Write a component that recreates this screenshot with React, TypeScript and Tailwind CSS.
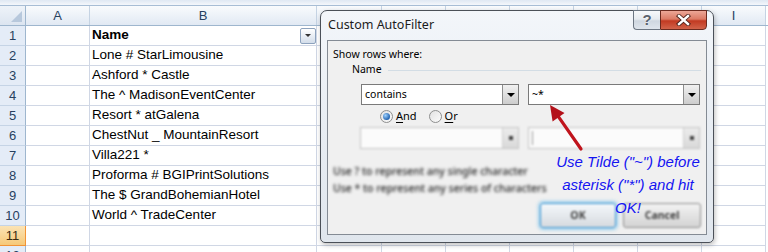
const names = [
  "Name",
  "Lone # StarLimousine",
  "Ashford * Castle",
  "The ^ MadisonEventCenter",
  "Resort * atGalena",
  "ChestNut _ MountainResort",
  "Villa221 *",
  "Proforma # BGIPrintSolutions",
  "The $ GrandBohemianHotel",
  "World ^ TradeCenter",
  "",
  "",
];

// C..H sit behind the dialog, so their letters are left blank
const cols = [
  { label: "A", w: "w-[64px]", show: true },
  { label: "B", w: "w-[227px]", show: true },
  { label: "C", w: "w-[65px]", show: false },
  { label: "D", w: "w-[64px]", show: false },
  { label: "E", w: "w-[64px]", show: false },
  { label: "F", w: "w-[64px]", show: false },
  { label: "G", w: "w-[64px]", show: false },
  { label: "H", w: "w-[64px]", show: false },
  { label: "I", w: "w-[64px]", show: true },
];

const Caret = ({ size = 4, color = "border-t-black" }: { size?: number; color?: string }) => (
  <span
    className={`block h-0 w-0 border-l-transparent border-r-transparent ${color} ${
      size === 4 ? "border-l-[4px] border-r-[4px] border-t-[4px]" : "border-l-[3px] border-r-[3px] border-t-[3px]"
    }`}
  />
);

const Combo = ({ w, value, disabled }: { w: string; value?: string; disabled?: boolean }) => (
  <div
    className={`flex h-full ${w} border ${
      disabled ? "border-[#c4c4c4] bg-[#fbfbfb]" : "border-[#7a7a7a] bg-white"
    }`}
  >
    <div className="flex flex-1 items-center pl-[3px] text-[10.5px] text-black">
      {disabled && value === "" ? <span className="block h-[14px] w-px bg-[#9a9a9a]" /> : value}
    </div>
    <div
      className={`flex w-[16px] items-center justify-center border-l bg-gradient-to-b ${
        disabled ? "border-[#cfcfcf] from-[#ececec] to-[#d9d9d9]" : "border-[#8e8e8e] from-[#f1f1f1] to-[#cdcdcd]"
      }`}
    >
      {disabled ? <span className="block h-[4px] w-[4px] bg-[#444]" /> : <Caret />}
    </div>
  </div>
);

const Radio = ({ checked, label }: { checked?: boolean; label: string }) => (
  <div className="flex items-center gap-[3px]">
    <span className="flex h-[13px] w-[13px] items-center justify-center rounded-full border border-[#8e8f8f] bg-gradient-to-br from-[#e2e2e2] to-[#fbfbfb]">
      {checked && (
        <span className="block h-[7px] w-[7px] rounded-full bg-[radial-gradient(circle_at_35%_35%,#9fd2ff,#1a5cab_75%)]" />
      )}
    </span>
    <span className="text-[11px] text-black">
      <span className="underline underline-offset-2">{label[0]}</span>
      {label.slice(1)}
    </span>
  </div>
);

const Sheet = () => (
  <div className="flex flex-col font-['Liberation_Sans',sans-serif]">
    {/* strip above the headers */}
    <div className="h-[6px] border-b border-[#a7bdd5] bg-gradient-to-b from-[#dfe8f3] to-[#f4f7fb]" />

    {/* column headers */}
    <div className="flex h-[20px] border-b border-[#9eb6ce]">
      <div className="flex w-[26px] items-end justify-end border-r border-[#9eb6ce] bg-gradient-to-b from-[#eef3f9] to-[#dce5f0] pb-[3px] pr-[3px]">
        <span className="block h-0 w-0 border-b-[11px] border-l-[11px] border-b-[#b7c8dc] border-l-transparent" />
      </div>
      {cols.map((c) => (
        <div
          key={c.label}
          className={`${c.w} flex shrink-0 items-center justify-center border-r border-[#c5d3e3] bg-gradient-to-b from-[#f9fbfd] to-[#e1e9f3] text-[13px] text-[#27415f]`}
        >
          {c.show ? c.label : null}
        </div>
      ))}
    </div>

    {/* rows */}
    {names.map((name, i) => {
      const active = i === 10;
      return (
        <div key={i} className="flex h-[20px] shrink-0">
          <div
            className={`flex w-[26px] items-center justify-center border-b border-r text-[13px] ${
              active
                ? "border-[#f29436] bg-gradient-to-b from-[#fbe3b4] to-[#f6c978] text-[#3b2a10]"
                : "border-b-[#c5d4e6] border-r-[#9eb6ce] bg-[#e4ecf7] text-[#27415f]"
            }`}
          >
            {i + 1}
          </div>
          {cols.map((c) => (
            <div
              key={c.label}
              className={`${c.w} flex shrink-0 items-center border-b border-r border-[#d0d7e5] text-[13.5px] text-black`}
            >
              {c.label === "B" && (
                <>
                  <span className={`pl-[2px] ${i === 0 ? "font-bold" : ""}`}>{name}</span>
                  {i === 0 && (
                    <span className="ml-auto flex h-[16px] w-[16px] items-center justify-center rounded-[2px] border border-[#8da2bd] bg-gradient-to-b from-white to-[#d3ddea]">
                      <Caret size={3} color="border-t-[#333]" />
                    </span>
                  )}
                </>
              )}
            </div>
          ))}
        </div>
      );
    })}
  </div>
);

const Dialog = () => (
  <div className="absolute left-[320px] top-[10px] flex h-[233px] w-[394px] flex-col rounded-t-[7px] rounded-b-[5px] border border-[#4b5058] bg-gradient-to-b from-[#f3f6fa] via-[#e8edf3] to-[#e0e6ed] font-['Noto_Sans',sans-serif] shadow-[1px_2px_5px_rgba(0,0,0,0.25)]">
    {/* title bar */}
    <div className="flex h-[29px] shrink-0 items-start">
      <span className="mt-[6px] pl-[7px] text-[12.5px] leading-[16px] text-[#1c1c1c]">Custom AutoFilter</span>
      <div className="-mt-px ml-auto mr-[6px] flex h-[20px]">
        <div className="flex w-[27px] items-center justify-center rounded-bl-[4px] border border-r-0 border-[#6c7682] bg-[linear-gradient(to_bottom,#f7f9fb_0%,#e6ebf0_45%,#cfd7e0_55%,#dfe5ec_100%)] font-['Liberation_Sans'] text-[15px] font-bold text-[#5b636e] [text-shadow:0_0_2px_#fff]">
          ?
        </div>
        <div className="flex w-[47px] items-center justify-center rounded-br-[4px] border border-[#6b2a1f] bg-[linear-gradient(to_bottom,#eca797_0%,#dc7a65_45%,#c23a22_55%,#d2634a_100%)]">
          <svg width="15" height="12" viewBox="0 0 15 12">
            <path d="M3 2 L12 10 M12 2 L3 10" stroke="#4a2019" strokeWidth="4.2" strokeLinecap="square" />
            <path d="M3 2 L12 10 M12 2 L3 10" stroke="#fff" strokeWidth="2.4" strokeLinecap="square" />
          </svg>
        </div>
      </div>
    </div>

    {/* client area */}
    <div className="mx-[6px] mb-[7px] flex flex-1 flex-col border border-[#848b94] bg-[#f0f0f0] px-[5px] text-[10.5px] text-black">
      <div className="mt-[5px] leading-[16px]">Show rows where:</div>
      <div className="flex h-[16px] items-center pl-[19px]">
        <span>Name</span>
        <span className="ml-[6px] h-px flex-1 bg-[#d3dde5]" />
      </div>

      <div className="mt-[6px] flex h-[21px] gap-[9px] pl-[28px]">
        <Combo w="w-[158px]" value="contains" />
        <Combo w="w-[172px]" value="~*" />
      </div>

      <div className="mt-[3px] flex h-[16px] items-center gap-[12px] pl-[47px]">
        <Radio checked label="And" />
        <Radio label="Or" />
      </div>

      <div className="mt-[3px] flex h-[22px] gap-[9px] pl-[27px] blur-[1.3px]">
        <Combo w="w-[159px]" disabled />
        <Combo w="w-[172px]" disabled value="" />
      </div>

      <div className="mt-[14px] text-[10.5px] font-medium leading-[17px] text-[#1e1e1e] blur-[1.4px]">
        <div>Use ? to represent any single character</div>
        <div>Use * to represent any series of characters</div>
      </div>

      <div className="mt-[6px] flex h-[25px] justify-end gap-[7px] blur-[1px]">
        <div className="flex w-[76px] items-center justify-center rounded-[3px] border border-[#3c93d0] bg-gradient-to-b from-[#f4f8fb] to-[#d6dadf] font-bold text-[#444] shadow-[0_0_3px_2px_rgba(110,190,235,0.6)]">
          OK
        </div>
        <div className="flex w-[78px] items-center justify-center rounded-[3px] border border-[#8c8c8c] bg-gradient-to-b from-[#f3f3f3] to-[#d3d3d3] font-bold text-[#444]">
          Cancel
        </div>
      </div>
    </div>
  </div>
);

export default function App() {
  return (
    <div className="relative h-[252px] w-[768px] overflow-hidden bg-white">
      <Sheet />
      <Dialog />

      {/* red arrow */}
      <svg className="absolute left-[540px] top-[100px]" width="50" height="56" viewBox="0 0 50 56">
        <line x1="41" y1="49" x2="18.4" y2="16.7" stroke="#c0141c" strokeWidth="3.2" strokeLinecap="round" />
        <polygon points="10,5 24.5,13 12.6,21.4" fill="#b3111a" />
      </svg>

      {/* annotation */}
      <div className="absolute left-[548px] top-[150px] w-[160px] text-center font-['Liberation_Sans',sans-serif] text-[15px] italic leading-[23px] text-[#1414f2]">
        <div>Use Tilde ("~") before</div>
        <div>asterisk ("*") and hit</div>
        <div>OK!</div>
      </div>
    </div>
  );
}
